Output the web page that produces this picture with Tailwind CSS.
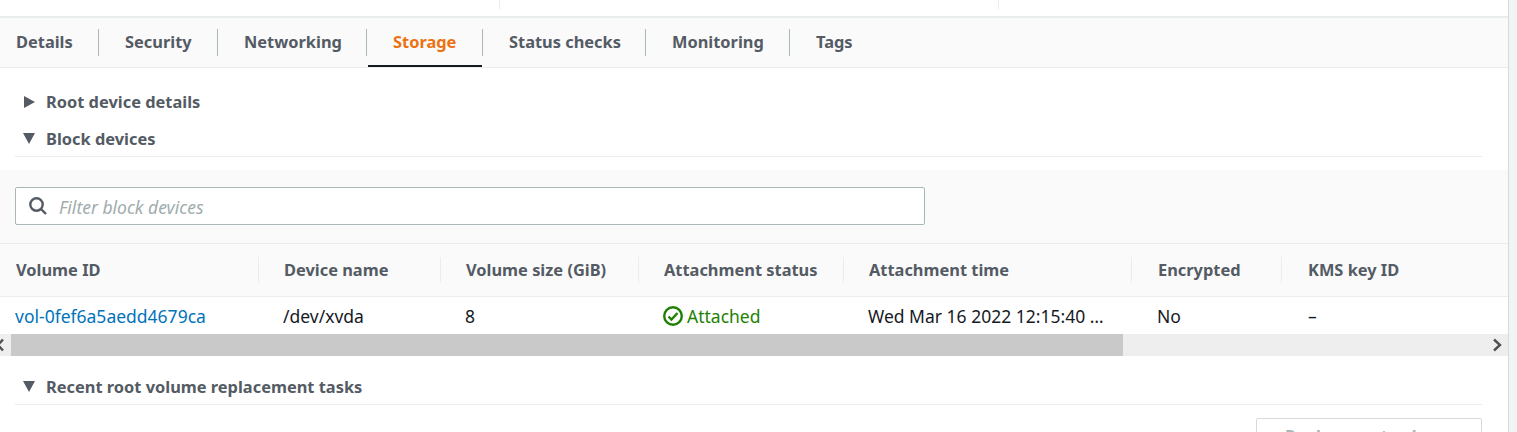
<!DOCTYPE html>
<html lang="en">
<head>
    <meta charset="UTF-8">
    <title>Storage</title>
    <script src="https://cdn.jsdelivr.net/npm/@tailwindcss/browser@4"></script>
</head>
<body class="h-[432px] overflow-hidden bg-white font-['Noto_Sans',sans-serif] text-[17.5px] leading-[22px] text-[#16191f]">
<div class="flex h-[432px]">
    <main class="w-[1509px] shrink-0 overflow-hidden border-r border-[#d5dbdb]">
        <!-- Top summary columns -->
        <div class="grid h-[18px] grid-cols-[500px_499px_1fr] border-b-2 border-[#eaeded]">
            <div class="h-[9px] border-r border-[#eaeded]"></div>
            <div class="h-[9px] border-r border-[#eaeded]"></div>
        </div>

        <!-- Tabs -->
        <nav class="flex h-[50px] border-b border-[#eaeded] bg-[#fafafa] text-[16.4px] font-bold text-[#545b64]">
            <div class="flex h-[49px] w-[99px] items-center pl-4"><span class="flex-1 pb-[2px]">Details</span><i class="h-[27px] w-px bg-[#aab7b8]"></i></div>
            <div class="flex h-[49px] w-[119px] items-center pl-[26px]"><span class="flex-1 pb-[2px]">Security</span><i class="h-[27px] w-px bg-[#aab7b8]"></i></div>
            <div class="flex h-[49px] w-[149px] items-center pl-[26px]"><span class="flex-1 pb-[2px]">Networking</span><i class="h-[27px] w-px bg-[#aab7b8]"></i></div>
            <div class="relative flex h-[49px] w-[116px] items-center pl-[26px] text-[#ec7211]"><span class="flex-1 pb-[2px]">Storage</span><i class="h-[27px] w-px bg-[#aab7b8]"></i><b class="absolute bottom-0 left-[1px] right-[1px] h-[2px] bg-[#16191f]"></b></div>
            <div class="flex h-[49px] w-[163px] items-center pl-[26px]"><span class="flex-1 pb-[2px]">Status checks</span><i class="h-[27px] w-px bg-[#aab7b8]"></i></div>
            <div class="flex h-[49px] w-[144px] items-center pl-[26px]"><span class="flex-1 pb-[2px]">Monitoring</span><i class="h-[27px] w-px bg-[#aab7b8]"></i></div>
            <div class="flex h-[49px] items-center pl-[26px]"><span class="pb-[2px]">Tags</span></div>
        </nav>

        <!-- Expandable sections -->
        <div class="ml-[15px] mr-[26px] pt-4 text-[16.4px] font-bold text-[#545b64]">
            <div class="flex h-[36px] items-center">
                <svg class="ml-[9px] mr-[11px] h-[12px] w-[11px] shrink-0" viewBox="0 0 11 12"><path d="M0 0L11 6L0 12Z" fill="#545b64"/></svg>
                <span>Root device details</span>
            </div>
            <div class="flex h-[37px] items-center border-b border-[#eaeded]">
                <svg class="ml-[8px] mr-[11px] mt-[1px] h-[11px] w-[12px] shrink-0" viewBox="0 0 12 11"><path d="M0 0H12L6 11Z" fill="#545b64"/></svg>
                <span class="pt-[2px]">Block devices</span>
            </div>
        </div>

        <!-- Filter -->
        <div class="mt-[13px] h-[74px] border-b border-[#eaeded] bg-[#fafafa] pl-[15px] pt-[17px]">
            <div class="flex h-[38px] w-[910px] items-center rounded-[2px] border border-[#aab7b8] bg-white pl-[13px]">
                <svg class="mr-[12px] h-[18px] w-[18px] shrink-0" viewBox="0 0 18 18" fill="none" stroke="#545b64" stroke-width="2.4"><circle cx="7.5" cy="7.5" r="6.2"/><path d="M12 12L17 17"/></svg>
                <span class="pt-[1px] italic text-[#a0acad]">Filter block devices</span>
            </div>
        </div>

        <!-- Table -->
        <div class="grid grid-cols-[259px_182px_198px_205px_288px_150px_1fr]">
            <div class="flex h-[53px] items-center border-b border-[#eaeded] bg-[#fafafa] pl-4 text-[16.4px] font-bold text-[#545b64]"><span class="flex-1">Volume ID</span><i class="h-[26px] w-px bg-[#eaeded]"></i></div>
            <div class="flex h-[53px] items-center border-b border-[#eaeded] bg-[#fafafa] pl-[25px] text-[16.4px] font-bold text-[#545b64]"><span class="flex-1">Device name</span><i class="h-[26px] w-px bg-[#eaeded]"></i></div>
            <div class="flex h-[53px] items-center border-b border-[#eaeded] bg-[#fafafa] pl-[25px] text-[16.4px] font-bold text-[#545b64]"><span class="flex-1">Volume size (GiB)</span><i class="h-[26px] w-px bg-[#eaeded]"></i></div>
            <div class="flex h-[53px] items-center border-b border-[#eaeded] bg-[#fafafa] pl-[25px] text-[16.4px] font-bold text-[#545b64]"><span class="flex-1">Attachment status</span><i class="h-[26px] w-px bg-[#eaeded]"></i></div>
            <div class="flex h-[53px] items-center border-b border-[#eaeded] bg-[#fafafa] pl-[25px] text-[16.4px] font-bold text-[#545b64]"><span class="flex-1">Attachment time</span><i class="h-[26px] w-px bg-[#eaeded]"></i></div>
            <div class="flex h-[53px] items-center border-b border-[#eaeded] bg-[#fafafa] pl-[26px] text-[16.4px] font-bold text-[#545b64]"><span class="flex-1">Encrypted</span><i class="h-[26px] w-px bg-[#eaeded]"></i></div>
            <div class="flex h-[53px] items-center border-b border-[#eaeded] bg-[#fafafa] pl-[26px] text-[16.4px] font-bold text-[#545b64]"><span>KMS key ID</span></div>

            <div class="flex h-[37px] items-center pt-[1px] pl-[15px] text-[#0073bb]">vol-0fef6a5aedd4679ca</div>
            <div class="flex h-[37px] items-center pt-[1px] pl-[24px]">/dev/xvda</div>
            <div class="flex h-[37px] items-center pt-[1px] pl-[24px]">8</div>
            <div class="flex h-[37px] items-center pt-[1px] pl-[24px] text-[#1d8102]">
                <svg class="mr-[4px] h-[20px] w-[20px] shrink-0" viewBox="0 0 20 20" fill="none" stroke="#1d8102" stroke-width="2.4"><circle cx="10" cy="10" r="8.8"/><path d="M5.5 10.5L8.5 13.5L14.5 7"/></svg>
                <span>Attached</span>
            </div>
            <div class="flex h-[37px] items-center pt-[1px] pl-[24px]"><span class="whitespace-nowrap">Wed Mar 16 2022 12:15:40 …</span></div>
            <div class="flex h-[37px] items-center pt-[1px] pl-[25px]">No</div>
            <div class="flex h-[37px] items-center pt-[1px] pl-[26px]">–</div>
        </div>

        <!-- Horizontal scrollbar -->
        <div class="flex h-[22px] items-center bg-[#eeeeee]">
            <svg class="h-[22px] w-[11px] shrink-0" viewBox="0 0 11 22" fill="none" stroke="#505050" stroke-width="2.4"><path d="M3 5.5L-2 11L3 16.5"/></svg>
            <div class="h-full w-[1112px] bg-[#c9c9c9]"></div>
            <div class="flex-1"></div>
            <svg class="mr-[5px] h-[22px] w-[10px] shrink-0" viewBox="0 0 10 22" fill="none" stroke="#505050" stroke-width="2.4"><path d="M1 5.5L7 11L1 16.5"/></svg>
        </div>

        <!-- Replacement tasks -->
        <div class="ml-[15px] mr-[26px] flex h-[49px] items-end border-b border-[#eaeded] pb-[6px] text-[16.4px] font-bold text-[#545b64]">
            <svg class="mb-[6px] ml-[8px] mr-[11px] h-[11px] w-[12px] shrink-0" viewBox="0 0 12 11"><path d="M0 0H12L6 11Z" fill="#545b64"/></svg>
            <span>Recent root volume replacement tasks</span>
        </div>
        <div class="mr-[26px] mt-[13px] flex justify-end">
            <div class="flex h-[38px] w-[226px] justify-center rounded-[2px] border border-[#d5dbdb] pt-[6px] text-[16.4px] font-bold text-[#aab7b8]">Replace root volume</div>
        </div>
    </main>
    <div class="flex-1 bg-[#f2f3f3]"></div>
</div>
</body>
</html>
